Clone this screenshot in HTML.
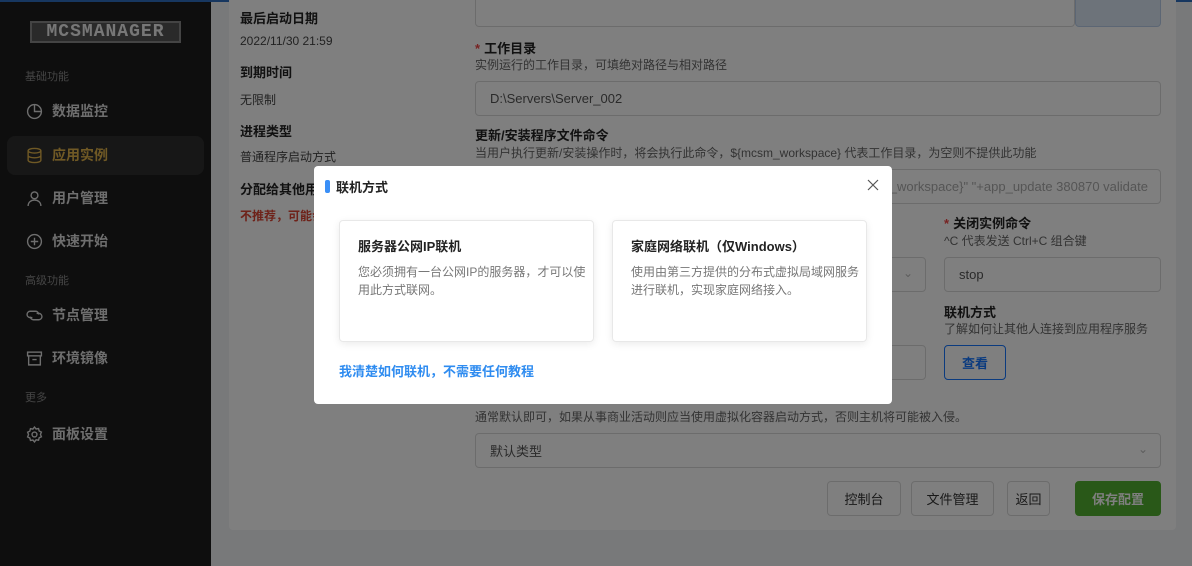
<!DOCTYPE html>
<html><head><meta charset="utf-8"><style>
*{box-sizing:border-box;margin:0;padding:0}
body{width:1192px;height:566px;overflow:hidden;position:relative;background:#f0f2f5;font-family:"Liberation Sans","Noto Sans CJK SC",sans-serif;}
.a{position:absolute;white-space:nowrap}
.sb{position:absolute;left:0;top:0;width:211px;height:566px;background:#1c1c1c}
.grp{position:absolute;left:25px;font-size:11px;color:#8a8a8a}
.mi{position:absolute;left:26px;font-size:14px;color:#ddd;font-weight:bold;display:flex;align-items:center}
.mi svg{margin-right:9px}
.card{position:absolute;left:229px;top:-10px;width:947px;height:540px;background:#fff;border-radius:4px}
.lab{font-size:13px;font-weight:bold;color:#222}
.desc{font-size:12px;color:#666}
.inp{position:absolute;border:1px solid #d9d9d9;border-radius:4px;background:#fff;font-size:13px;color:#555;padding-left:14px;display:flex;align-items:center}
.btn{position:absolute;top:481px;height:35px;border:1px solid #d9d9d9;border-radius:4px;background:#fff;font-size:13px;color:#333;display:flex;align-items:center;justify-content:center}
.ov{position:absolute;left:0;top:0;width:1192px;height:566px;background:rgba(0,0,0,0.5)}
.modal{position:absolute;left:314px;top:166px;width:578px;height:238px;background:#fff;border-radius:4px}
.oc{position:absolute;top:54px;width:255px;height:122px;border:1px solid #e8e8e8;border-radius:4px;box-shadow:0 2px 8px rgba(0,0,0,0.08);padding:15px 0 0 18px}
.oc h4{font-size:13px;color:#222;margin-bottom:8px}
.oc p{font-size:12px;color:#777;line-height:18px;white-space:normal;width:236px}
.req{color:#e44;margin-right:4px}
</style></head><body>
<div class="sb">
 <div class="a" style="left:30px;top:21px;width:151px;height:22px;border:2px solid #888;background:#555;color:#eee;font-family:'Liberation Mono',monospace;font-weight:bold;font-size:18px;letter-spacing:1px;line-height:18px;text-align:center">MCSMANAGER</div>
 <div class="grp" style="top:68px">基础功能</div>
 <div class="mi" style="top:101px"><svg width="17" height="17" viewBox="0 0 16 16" fill="none" stroke="#ddd" stroke-width="1.3"><circle cx="8" cy="8" r="6.5"/><path d="M8 1.5V8H14.5"/></svg>数据监控</div>
 <div class="a" style="left:7px;top:136px;width:197px;height:39px;background:#2e2e2e;border-radius:8px"></div>
 <div class="mi" style="top:145px;color:#e0b34a"><svg width="17" height="17" viewBox="0 0 16 16" fill="none" stroke="#e0b34a" stroke-width="1.3"><ellipse cx="8" cy="3.5" rx="6" ry="2.2"/><path d="M2 3.5v9c0 1.2 2.7 2.2 6 2.2s6-1 6-2.2v-9M2 8c0 1.2 2.7 2.2 6 2.2S14 9.2 14 8"/></svg>应用实例</div>
 <div class="mi" style="top:188px"><svg width="17" height="17" viewBox="0 0 16 16" fill="none" stroke="#ddd" stroke-width="1.3"><circle cx="8" cy="5" r="3.2"/><path d="M2 15c0-3.5 2.7-5.5 6-5.5s6 2 6 5.5"/></svg>用户管理</div>
 <div class="mi" style="top:231px"><svg width="17" height="17" viewBox="0 0 16 16" fill="none" stroke="#ddd" stroke-width="1.3"><circle cx="8" cy="8" r="6.5"/><path d="M8 4.5v7M4.5 8h7"/></svg>快速开始</div>
 <div class="grp" style="top:272px">高级功能</div>
 <div class="mi" style="top:305px"><svg width="17" height="17" viewBox="0 0 16 16" fill="none" stroke="#ddd" stroke-width="1.3"><path d="M6 10H4a3 3 0 010-6h5a3 3 0 013 3"/><path d="M10 6h2a3 3 0 010 6H7a3 3 0 01-3-3"/></svg>节点管理</div>
 <div class="mi" style="top:348px"><svg width="17" height="17" viewBox="0 0 16 16" fill="none" stroke="#ddd" stroke-width="1.3"><rect x="1.5" y="2" width="13" height="3.5"/><path d="M2.5 5.5V14h11V5.5M6 9h4"/></svg>环境镜像</div>
 <div class="grp" style="top:389px">更多</div>
 <div class="mi" style="top:424px"><svg width="17" height="17" viewBox="0 0 16 16" fill="none" stroke="#ddd" stroke-width="1.3"><path d="M8 1l1.5 1.8 2.3-.4.6 2.3 2.1 1-.9 2.2.9 2.2-2.1 1-.6 2.3-2.3-.4L8 15l-1.5-1.8-2.3.4-.6-2.3-2.1-1L2.4 8l-.9-2.2 2.1-1 .6-2.3 2.3.4z"/><circle cx="8" cy="8" r="2.3"/></svg>面板设置</div>
</div>
<div class="a" style="left:0;top:0;width:1192px;height:2px;background:#2f6fc0;z-index:0"></div>
<div class="card">
 <div style="position:absolute;left:0;top:10px">
  <div class="a lab" style="left:11px;top:8px">最后启动日期</div>
  <div class="a desc" style="left:11px;top:34px;color:#444">2022/11/30 21:59</div>
  <div class="a lab" style="left:11px;top:62px">到期时间</div>
  <div class="a desc" style="left:11px;top:91px;color:#444">无限制</div>
  <div class="a lab" style="left:11px;top:121px">进程类型</div>
  <div class="a desc" style="left:11px;top:148px;color:#444">普通程序启动方式</div>
  <div class="a lab" style="left:11px;top:179px">分配给其他用户</div>
  <div class="a desc" style="left:11px;top:207px;color:#d43;font-weight:bold">不推荐，可能会</div>
 </div>
</div>
<div class="inp" style="left:475px;top:-8px;width:600px;height:35px"></div>
<div class="inp" style="left:1075px;top:-8px;width:86px;height:35px;background:#dbe6f5;border-color:#b9cde8"></div>
<div class="a lab" style="left:475px;top:38px"><span class="req">*</span>工作目录</div>
<div class="a desc" style="left:475px;top:56px">实例运行的工作目录，可填绝对路径与相对路径</div>
<div class="inp" style="left:475px;top:81px;width:686px;height:35px">D:\Servers\Server_002</div>
<div class="a lab" style="left:475px;top:125px">更新/安装程序文件命令</div>
<div class="a desc" style="left:475px;top:144px">当用户执行更新/安装操作时，将会执行此命令，${mcsm_workspace} 代表工作目录，为空则不提供此功能</div>
<div class="inp" style="left:475px;top:169px;width:686px;height:35px;color:#aaa;overflow:hidden;justify-content:flex-end;padding-right:12px">"${mcsm_workspace}" "+app_update 380870 validate</div>
<div class="inp" style="left:475px;top:257px;width:451px;height:35px"><span class="a" style="right:12px;top:8px;color:#bbb;font-size:12px">&#8964;</span></div>
<div class="a lab" style="left:944px;top:213px"><span class="req">*</span>关闭实例命令</div>
<div class="a desc" style="left:944px;top:232px">^C 代表发送 Ctrl+C 组合键</div>
<div class="inp" style="left:944px;top:257px;width:217px;height:35px">stop</div>
<div class="a lab" style="left:944px;top:302px">联机方式</div>
<div class="a desc" style="left:944px;top:320px">了解如何让其他人连接到应用程序服务</div>
<div class="inp" style="left:475px;top:345px;width:451px;height:35px"></div>
<div class="inp" style="left:944px;top:345px;width:62px;height:35px;border-color:#1677ff;color:#1677ff;font-weight:bold;padding:0;justify-content:center">查看</div>
<div class="a desc" style="left:475px;top:408px">通常默认即可，如果从事商业活动则应当使用虚拟化容器启动方式，否则主机将可能被入侵。</div>
<div class="inp" style="left:475px;top:433px;width:686px;height:35px">默认类型<span class="a" style="right:12px;top:8px;color:#bbb;font-size:12px">&#8964;</span></div>
<div class="btn" style="left:827px;width:74px">控制台</div>
<div class="btn" style="left:911px;width:83px">文件管理</div>
<div class="btn" style="left:1007px;width:43px">返回</div>
<div class="btn" style="left:1075px;width:86px;background:#52b130;border-color:#52b130;color:#fff;font-weight:bold">保存配置</div>
<div class="ov"></div>
<div class="modal">
 <div class="a" style="left:11px;top:14px;width:5px;height:13px;background:#3a8ff7;border-radius:2px"></div>
 <div class="a" style="left:22px;top:11px;font-size:13px;font-weight:bold;color:#222">联机方式</div>
 <svg class="a" style="left:553px;top:13px" width="12" height="12" viewBox="0 0 12 12" stroke="#555" stroke-width="1.2"><path d="M1 1l10 10M11 1L1 11"/></svg>
 <div class="oc" style="left:25px"><h4>服务器公网IP联机</h4><p>您必须拥有一台公网IP的服务器，才可以使用此方式联网。</p></div>
 <div class="oc" style="left:298px"><h4>家庭网络联机（仅Windows）</h4><p>使用由第三方提供的分布式虚拟局域网服务进行联机，实现家庭网络接入。</p></div>
 <div class="a" style="left:25px;top:195px;font-size:13px;color:#2f8cf0;font-weight:bold">我清楚如何联机，不需要任何教程</div>
</div>
</body></html>
